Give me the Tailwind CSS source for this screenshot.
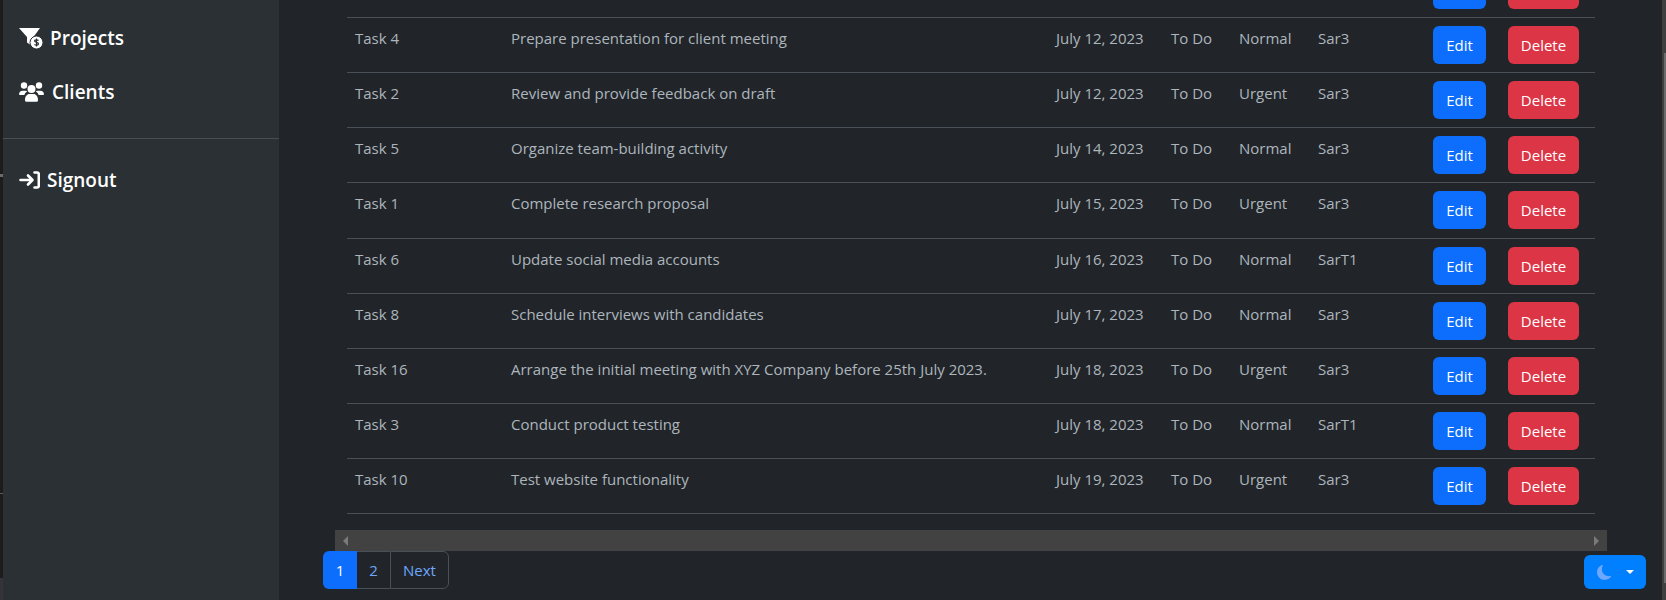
<!DOCTYPE html>
<html lang="en">
<head>
  <meta charset="UTF-8">
  <title>Tasks</title>
  <script src="https://cdn.jsdelivr.net/npm/@tailwindcss/browser@4"></script>
</head>
<body class="h-[600px] overflow-hidden bg-[#212529] font-['Open_Sans',sans-serif] text-[15px] leading-6 text-[#adb5bd]">
  <div class="flex h-[600px]">

    <!-- window edge -->
    <div class="flex w-[3px] flex-col bg-[#1c1c1c]">
      <div class="mt-[174px] h-[3px] bg-[#6b6b6b]"></div>
      <div class="mt-[316px] h-px bg-[#5a5a5a]"></div>
      <div class="mt-[84px] flex-1 bg-[#333338]"></div>
    </div>

    <!-- sidebar -->
    <aside class="w-[276px] bg-[#2b3035] text-[19px] font-semibold text-white">
      <a class="mt-[24px] flex h-[27px] items-center pl-4">
        <svg class="h-[22px] w-[24px]" viewBox="0 0 24 22">
          <path d="M0 1h21l-6.500 9v10L8 15.500V10z" fill="#fff"/>
          <circle cx="17.500" cy="15.500" r="6.500" fill="#fff" stroke="#2b3035" stroke-width="1"/>
          <path d="M19.500 13.500c-1-1-4-1-4 .6s4 .8 4 2.600-3 1.600-4 .6M17.500 11.500v8" fill="none" stroke="#2b3035" stroke-width="1.200"/>
        </svg>
        <span class="ml-[7px]">Projects</span>
      </a>
      <a class="mt-[27px] flex h-[27px] items-center pl-4">
        <svg class="h-[20px] w-[25px]" viewBox="0 0 25 20">
          <circle cx="5" cy="3.500" r="3.200" fill="#fff"/>
          <circle cx="20" cy="3.500" r="3.200" fill="#fff"/>
          <circle cx="12.500" cy="7" r="4" fill="#fff"/>
          <path d="M0 12.500c0-2.500 1.500-3.800 3.500-3.800h3c.8 0 1.200.3 1.700.8-1.500 1-2.500 2-2.800 3.500H1c-.6 0-1-.2-1-.5zM25 12.500c0-2.500-1.500-3.800-3.500-3.800h-3c-.8 0-1.200.3-1.700.8 1.500 1 2.500 2 2.800 3.500H24c.6 0 1-.2 1-.5zM6 18c0-3.500 2-6 4.500-6h4c2.500 0 4.500 2.500 4.500 6 0 1-.5 1.800-1.500 1.800h-10C6.500 19.800 6 19 6 18z" fill="#fff"/>
        </svg>
        <span class="ml-[8px]">Clients</span>
      </a>
      <div class="mt-[33px] h-px bg-[#4a4e52]"></div>
      <a class="mt-[27px] flex h-[27px] items-center pl-4">
        <svg class="h-[18px] w-[21px]" viewBox="0 0 21 18" fill="none" stroke="#fff" stroke-width="2.600" stroke-linecap="round" stroke-linejoin="round">
          <path d="M1.500 9h11M9 4.500l4.500 4.500-4.500 4.500"/>
          <path d="M15.500 1.500h2.500c1 0 1.800.8 1.800 1.800v11.400c0 1-.8 1.800-1.800 1.800h-2.500"/>
        </svg>
        <span class="ml-[7px]">Signout</span>
      </a>
    </aside>

    <!-- main -->
    <main class="flex w-[1383px] flex-col overflow-hidden">
      <div class="-mt-[37px] mb-4 ml-[68px] w-[1248px]">
        <table class="w-full table-fixed border-separate border-spacing-0 [&_td]:border-b [&_td]:border-[#495057] [&_td]:p-2 [&_td]:align-top">
          <colgroup>
            <col class="w-[156px]"><col class="w-[545px]"><col class="w-[115px]"><col class="w-[68px]"><col class="w-[79px]"><col class="w-[115px]"><col class="w-[75px]"><col class="w-[95px]">
          </colgroup>
          <tbody>
            <tr class="h-[55px]">
              <td></td><td></td><td></td><td></td><td></td><td></td>
              <td><button class="h-[38px] w-[53px] rounded-md bg-[#0d6efd] text-white">Edit</button></td>
              <td><button class="h-[38px] w-[71px] rounded-md bg-[#dc3545] text-white">Delete</button></td>
            </tr>
            <tr class="h-[55px]">
              <td>Task 4</td><td>Prepare presentation for client meeting</td><td>July 12, 2023</td><td>To Do</td><td>Normal</td><td>Sar3</td>
              <td><button class="h-[38px] w-[53px] rounded-md bg-[#0d6efd] text-white">Edit</button></td>
              <td><button class="h-[38px] w-[71px] rounded-md bg-[#dc3545] text-white">Delete</button></td>
            </tr>
            <tr class="h-[55px]">
              <td>Task 2</td><td>Review and provide feedback on draft</td><td>July 12, 2023</td><td>To Do</td><td>Urgent</td><td>Sar3</td>
              <td><button class="h-[38px] w-[53px] rounded-md bg-[#0d6efd] text-white">Edit</button></td>
              <td><button class="h-[38px] w-[71px] rounded-md bg-[#dc3545] text-white">Delete</button></td>
            </tr>
            <tr class="h-[55px]">
              <td>Task 5</td><td>Organize team-building activity</td><td>July 14, 2023</td><td>To Do</td><td>Normal</td><td>Sar3</td>
              <td><button class="h-[38px] w-[53px] rounded-md bg-[#0d6efd] text-white">Edit</button></td>
              <td><button class="h-[38px] w-[71px] rounded-md bg-[#dc3545] text-white">Delete</button></td>
            </tr>
            <tr class="h-[56px]">
              <td>Task 1</td><td>Complete research proposal</td><td>July 15, 2023</td><td>To Do</td><td>Urgent</td><td>Sar3</td>
              <td><button class="h-[38px] w-[53px] rounded-md bg-[#0d6efd] text-white">Edit</button></td>
              <td><button class="h-[38px] w-[71px] rounded-md bg-[#dc3545] text-white">Delete</button></td>
            </tr>
            <tr class="h-[55px]">
              <td>Task 6</td><td>Update social media accounts</td><td>July 16, 2023</td><td>To Do</td><td>Normal</td><td>SarT1</td>
              <td><button class="h-[38px] w-[53px] rounded-md bg-[#0d6efd] text-white">Edit</button></td>
              <td><button class="h-[38px] w-[71px] rounded-md bg-[#dc3545] text-white">Delete</button></td>
            </tr>
            <tr class="h-[55px]">
              <td>Task 8</td><td>Schedule interviews with candidates</td><td>July 17, 2023</td><td>To Do</td><td>Normal</td><td>Sar3</td>
              <td><button class="h-[38px] w-[53px] rounded-md bg-[#0d6efd] text-white">Edit</button></td>
              <td><button class="h-[38px] w-[71px] rounded-md bg-[#dc3545] text-white">Delete</button></td>
            </tr>
            <tr class="h-[55px]">
              <td>Task 16</td><td>Arrange the initial meeting with XYZ Company before 25th July 2023.</td><td>July 18, 2023</td><td>To Do</td><td>Urgent</td><td>Sar3</td>
              <td><button class="h-[38px] w-[53px] rounded-md bg-[#0d6efd] text-white">Edit</button></td>
              <td><button class="h-[38px] w-[71px] rounded-md bg-[#dc3545] text-white">Delete</button></td>
            </tr>
            <tr class="h-[55px]">
              <td>Task 3</td><td>Conduct product testing</td><td>July 18, 2023</td><td>To Do</td><td>Normal</td><td>SarT1</td>
              <td><button class="h-[38px] w-[53px] rounded-md bg-[#0d6efd] text-white">Edit</button></td>
              <td><button class="h-[38px] w-[71px] rounded-md bg-[#dc3545] text-white">Delete</button></td>
            </tr>
            <tr class="h-[55px]">
              <td>Task 10</td><td>Test website functionality</td><td>July 19, 2023</td><td>To Do</td><td>Urgent</td><td>Sar3</td>
              <td><button class="h-[38px] w-[53px] rounded-md bg-[#0d6efd] text-white">Edit</button></td>
              <td><button class="h-[38px] w-[71px] rounded-md bg-[#dc3545] text-white">Delete</button></td>
            </tr>
          </tbody>
        </table>
      </div>

      <!-- horizontal scrollbar -->
      <div class="ml-[56px] flex h-[21px] w-[1272px] items-center justify-between bg-[#424242] px-2">
        <span class="h-0 w-0 border-y-[5px] border-r-[5px] border-y-transparent border-r-[#7a7a7a]"></span>
        <span class="h-0 w-0 border-y-[5px] border-l-[5px] border-y-transparent border-l-[#7a7a7a]"></span>
      </div>

      <div class="ml-[44px] mr-4 flex items-end justify-between">
        <nav class="flex h-[38px]">
          <a class="flex w-[34px] items-center justify-center rounded-l-md bg-[#0d6efd] text-white">1</a>
          <a class="flex w-[33px] items-center justify-center border-y border-[#495057] text-[#6ea8fe]">2</a>
          <a class="flex w-[59px] items-center justify-center rounded-r-md border border-[#495057] text-[#6ea8fe]">Next</a>
        </nav>
        <button class="flex h-[34px] w-[62px] items-center justify-center gap-[14px] rounded-md bg-[#007fff]">
          <svg class="h-[15px] w-[15px]" viewBox="0 0 16 16"><path d="M6 .278a.768.768 0 0 1 .08.858 7.208 7.208 0 0 0-.878 3.460c0 4.021 3.278 7.277 7.318 7.277.527 0 1.040-.055 1.533-.16a.787.787 0 0 1 .81.316.733.733 0 0 1-.031.893A8.349 8.349 0 0 1 8.344 16C3.734 16 0 12.286 0 7.710 0 4.266 2.114 1.312 5.124.06A.751.751 0 0 1 6 .278z" fill="#6ea8fe"/></svg>
          <span class="h-0 w-0 border-x-[4px] border-t-[4px] border-x-transparent border-t-white"></span>
        </button>
      </div>
    </main>

    <!-- page scrollbar -->
    <div class="w-1 bg-[#3f3f3f] pl-0.5 pt-[53px] pb-[17px]">
      <div class="h-full bg-[#6b6b6b]"></div>
    </div>
  </div>
</body>
</html>
